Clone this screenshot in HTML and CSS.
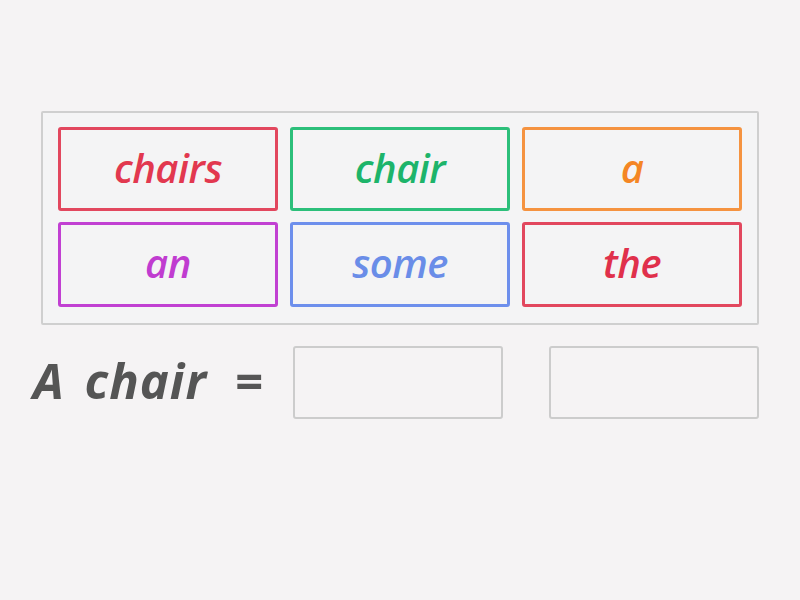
FILE: index.html
```html
<!DOCTYPE html>
<html>
<head>
<meta charset="utf-8">
<link rel="stylesheet" href="styles.css">
</head>
<body>
<div class="page">
  <div class="panel">
    <div class="tile red"><span>chairs</span></div>
    <div class="tile green"><span>chair</span></div>
    <div class="tile orange"><span>a</span></div>
    <div class="tile purple"><span>an</span></div>
    <div class="tile blue"><span>some</span></div>
    <div class="tile crimson"><span>the</span></div>
  </div>
  <div class="question">
    <div class="label">A chair <span class="eq">=</span></div>
    <div class="slot"></div>
    <div class="slot last"></div>
  </div>
</div>
</body>
</html>
```
FILE: styles.css
```css
html, body {
  margin: 0;
  padding: 0;
  background: #f5f3f4;
}
.page {
  width: 800px;
  height: 600px;
  padding-top: 111px;
  box-sizing: border-box;
  font-family: "Open Sans", "Noto Sans", sans-serif;
}
.panel {
  margin-left: 41px;
  width: 718px;
  height: 214px;
  box-sizing: border-box;
  border: 2px solid #cfcfcf;
  border-radius: 2px;
  background: #f4f4f5;
  padding: 14px 15px 15px 15px;
  display: grid;
  grid-template-columns: 220px 220px 220px;
  grid-template-rows: 84px 85px;
  column-gap: 12px;
  row-gap: 11px;
}
.tile {
  box-sizing: border-box;
  border: 3px solid;
  border-radius: 3px;
  display: flex;
  align-items: center;
  justify-content: center;
  font-style: italic;
  font-weight: 600;
  font-size: 40px;
  letter-spacing: -0.5px;
}
.tile span { position: relative; top: -2px; }
.red { border-color: #e2475e; color: #e2384f; }
.green { border-color: #2cbf7a; color: #1db46a; }
.orange { border-color: #f59340; color: #f48624; }
.purple { border-color: #c140d2; color: #c03cd0; }
.blue { border-color: #6d8fec; color: #6a8de8; }
.crimson { border-color: #e2475e; color: #e0304b; }
.question {
  display: flex;
  align-items: center;
  margin-top: 21px;
  height: 73px;
}
.label {
  flex: 0 0 auto;
  margin-left: 33px;
  width: 260px;
  font-style: italic;
  font-weight: 700;
  font-size: 49px;
  color: #555555;
  letter-spacing: 1px;
  word-spacing: 6px;
  position: relative;
  top: -3px;
  white-space: nowrap;
}
.eq { margin-left: 8px; }
.slot {
  flex: 0 0 auto;
  box-sizing: border-box;
  width: 210px;
  height: 73px;
  border: 2px solid #cccccc;
  border-radius: 3px;
  margin-right: 46px;
}
.slot.last { margin-right: 0; }
```
